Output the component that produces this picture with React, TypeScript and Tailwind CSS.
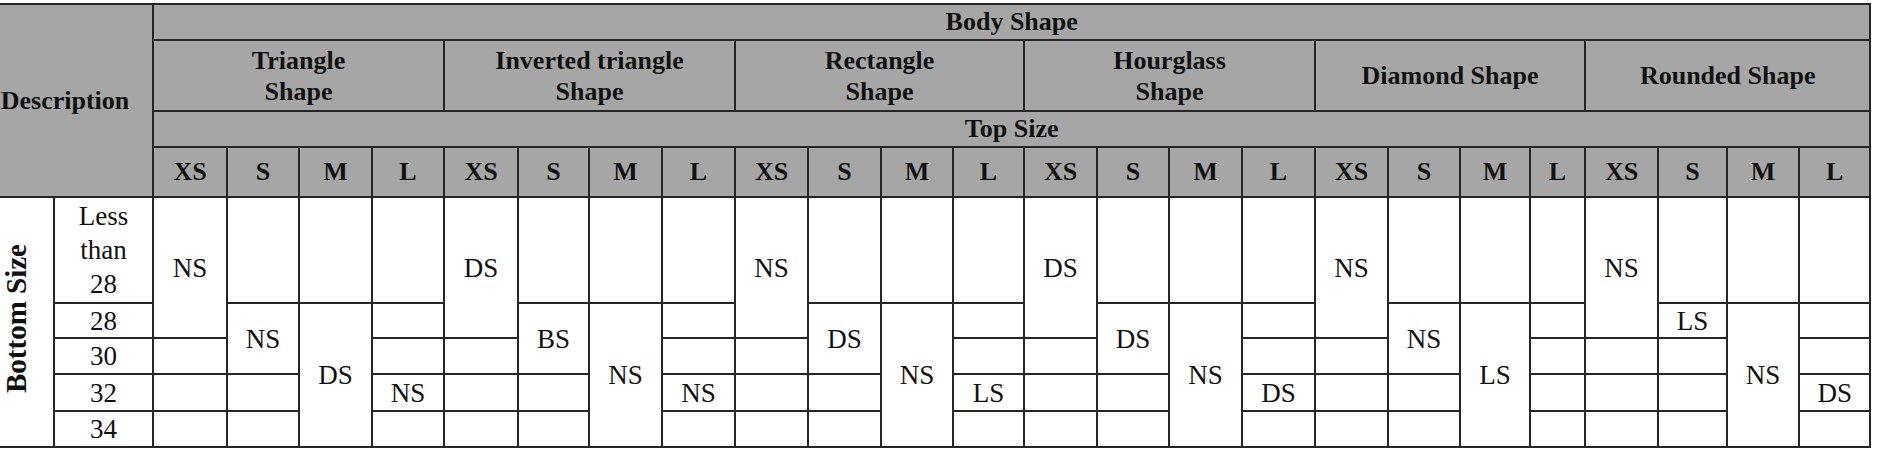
import * as React from "react";

type Seg = [string, number];

// column widths between the rule lines, first one is clipped by the page edge
const colWidths = [
  77, 99, 74, 72, 73, 72, 74, 71, 73, 73, 73, 73, 72, 71, 73, 72, 73, 73, 73, 72, 70, 55, 73, 69, 72, 71,
];

const shapes = [
  ["Triangle", "Shape"],
  ["Inverted triangle", "Shape"],
  ["Rectangle", "Shape"],
  ["Hourglass", "Shape"],
  ["Diamond Shape"],
  ["Rounded Shape"],
];

const sizes = ["XS", "S", "M", "L"];

const colA = (t: string): Seg[] => [[t, 2], ["", 1], ["", 1], ["", 1]];
const colB = (t: string): Seg[] => [["", 1], [t, 2], ["", 1], ["", 1]];
const colC = (t: string): Seg[] => [["", 1], [t, 4]];
const colD = (t: string): Seg[] => [["", 1], ["", 1], ["", 1], [t, 1], ["", 1]];

const columns: Seg[][] = [
  // Triangle
  colA("NS"), colB("NS"), colC("DS"), colD("NS"),
  // Inverted triangle
  colA("DS"), colB("BS"), colC("NS"), colD("NS"),
  // Rectangle
  colA("NS"), colB("DS"), colC("NS"), colD("LS"),
  // Hourglass
  colA("DS"), colB("DS"), colC("NS"), colD("DS"),
  // Diamond
  colA("NS"), colB("NS"), colC("LS"), colD(""),
  // Rounded
  colA("NS"), [["", 1], ["LS", 1], ["", 1], ["", 1], ["", 1]], colC("NS"), colD("DS"),
];

const rowLabels = [["Less", "than", "28"], ["28"], ["30"], ["32"], ["34"]];
const rowHeights = ["h-[106px]", "h-[35px]", "h-[36px]", "h-[37px]", "h-[36px]"];

// which segment starts at each body row
function cellsForRow(r: number) {
  const out: { text: string; span: number; key: number }[] = [];
  columns.forEach((segs, ci) => {
    let at = 0;
    for (const [text, span] of segs) {
      if (at === r) out.push({ text, span, key: ci });
      at += span;
    }
  });
  return out;
}

const bd = "border-2 border-[#262626]";
const head = `${bd} bg-[#a6a6a6] p-0 text-center align-middle font-bold text-[26px] text-[#111]`;
const body = `${bd} bg-white p-0 text-center align-middle text-[27px] leading-[30px] text-[#111]`;

export default function App() {
  return (
    <div className="w-[1890px] h-[459px] overflow-hidden bg-white pt-[3px] font-['Liberation_Serif','Times_New_Roman',serif]">
      <table className="-ml-[24px] w-[1893px] table-fixed border-collapse">
        <colgroup>
          {colWidths.map((w, i) => (
            <col key={i} style={{ width: w }} />
          ))}
        </colgroup>
        <thead>
          <tr className="h-[36px]">
            <th colSpan={2} rowSpan={4} className={`${head} leading-[30px]`}>
              Description
            </th>
            <th colSpan={24} className={`${head} leading-[30px]`}>
              Body Shape
            </th>
          </tr>
          <tr className="h-[71px]">
            {shapes.map((lines, i) => (
              <th key={i} colSpan={4} className={`${head} leading-[31px]`}>
                {lines.map((l, j) => (
                  <div key={j}>{l}</div>
                ))}
              </th>
            ))}
          </tr>
          <tr className="h-[36px]">
            <th colSpan={24} className={`${head} leading-[30px]`}>
              Top Size
            </th>
          </tr>
          <tr className="h-[50px]">
            {shapes.flatMap((_, i) =>
              sizes.map((s) => (
                <th key={`${i}-${s}`} className={`${head} leading-[30px]`}>
                  {s}
                </th>
              ))
            )}
          </tr>
        </thead>
        <tbody>
          {rowLabels.map((label, r) => (
            <tr key={r} className={rowHeights[r]}>
              {r === 0 && (
                <td rowSpan={5} className={`${bd} bg-white p-0 text-center align-middle`}>
                  <span className="inline-block rotate-180 font-bold text-[29px] leading-[30px] text-[#111] [writing-mode:vertical-rl]">
                    Bottom Size
                  </span>
                </td>
              )}
              <td className={`${body} ${r === 0 ? "leading-[34px]" : ""}`}>
                {label.map((l, j) => (
                  <div key={j}>{l}</div>
                ))}
              </td>
              {cellsForRow(r).map((c) => (
                <td key={c.key} rowSpan={c.span} className={body}>
                  {c.text}
                </td>
              ))}
            </tr>
          ))}
        </tbody>
      </table>
    </div>
  );
}
